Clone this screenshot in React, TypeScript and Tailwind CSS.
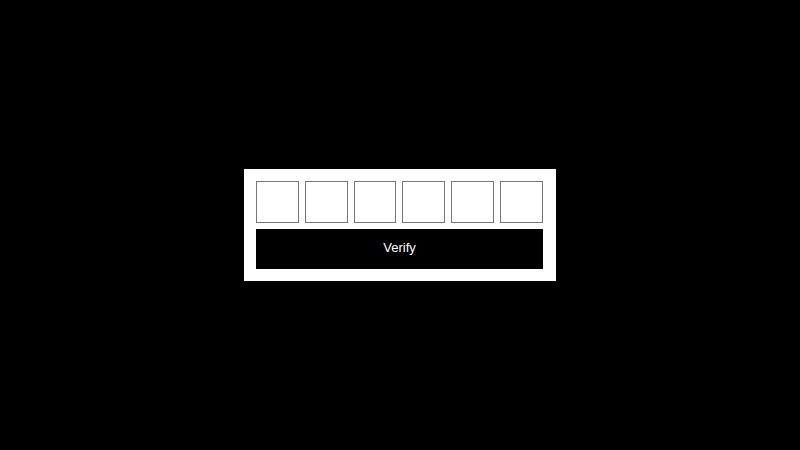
export default function App() {
  return (
    <div className="w-[800px] h-[450px] bg-black flex items-center justify-center" style={{ fontFamily: '"Liberation Sans", Arial, sans-serif' }}>
      <div className="bg-white pt-3 pb-3 pl-3 pr-[13px] w-[312px] flex flex-col gap-1.5">
        <div className="flex gap-1.5">
          {[0, 1, 2, 3, 4, 5].map((i) => (
            <input key={i} maxLength={1} className="w-[42.8px] h-[42px] border border-[#767676] bg-white text-center outline-none" />
          ))}
        </div>
        <button className="h-10 bg-black text-white text-[13px] pb-0.5">Verify</button>
      </div>
    </div>
  );
}
